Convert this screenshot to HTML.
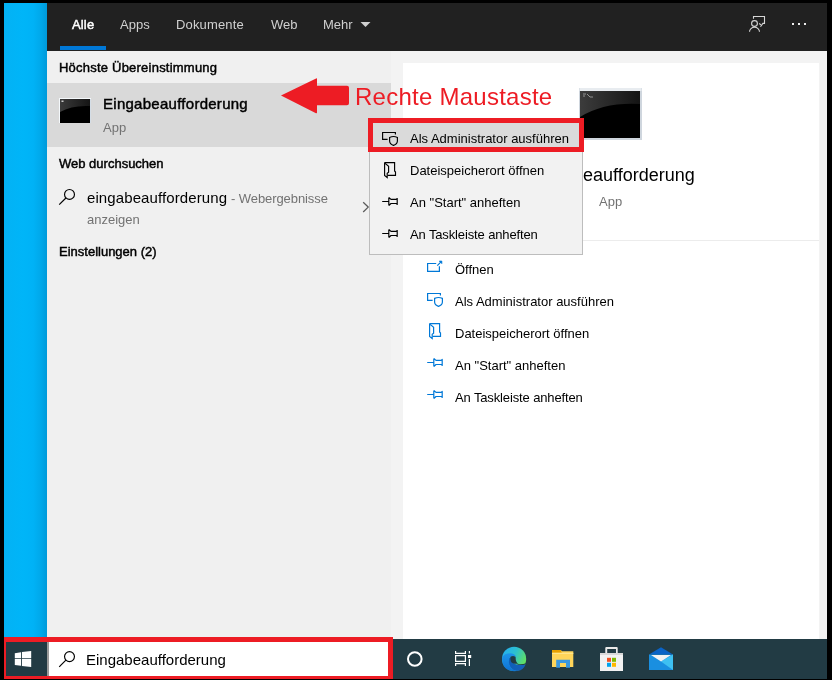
<!DOCTYPE html>
<html><head><meta charset="utf-8">
<style>
*{margin:0;padding:0;box-sizing:border-box}
html,body{width:832px;height:680px;overflow:hidden;background:#000;font-family:"Liberation Sans",sans-serif}
.a{position:absolute}
.t{position:absolute;white-space:nowrap;line-height:1;will-change:transform}
.s13{font-size:13px}
.b{-webkit-text-stroke:0.45px currentColor}
svg{position:absolute;overflow:visible}
</style></head><body>
<!-- blue strip -->
<div class="a" style="left:4px;top:3px;width:43px;height:634px;background:linear-gradient(90deg,#04b2f4 0%,#00b5f8 45%,#00b2f6 68%,#00a8ea 86%,#009ada 100%)"></div>
<!-- header -->
<div class="a" style="left:47px;top:3px;width:780px;height:48px;background:#212121"></div>
<!-- left pane -->
<div class="a" style="left:47px;top:51px;width:344px;height:588px;background:#f0f0f0"></div>
<!-- right gray -->
<div class="a" style="left:391px;top:51px;width:436px;height:588px;background:#f3f3f3"></div>
<!-- white card -->
<div class="a" style="left:403px;top:63px;width:416px;height:576px;background:#fff"></div>
<!-- taskbar -->
<div class="a" style="left:4px;top:639px;width:823px;height:40px;background:#223b44"></div>

<!-- header tabs -->
<div class="t s13 b" style="left:72px;top:18px;color:#fff;letter-spacing:0.15px">Alle</div>
<div class="t s13" style="left:120px;top:18px;color:#d0d0d0">Apps</div>
<div class="t s13" style="left:176px;top:18px;color:#d0d0d0;letter-spacing:0.15px">Dokumente</div>
<div class="t s13" style="left:271px;top:18px;color:#d0d0d0">Web</div>
<div class="t s13" style="left:323px;top:18px;color:#d0d0d0">Mehr</div>
<svg style="left:360px;top:21px" width="11" height="7"><path d="M0.5,1 H10.5 L5.5,6 Z" fill="#d0d0d0"/></svg>
<div class="a" style="left:60px;top:46px;width:46px;height:4px;background:#0078d7"></div>
<!-- feedback icon -->
<svg style="left:745px;top:12px" width="24" height="24" fill="none" stroke="#d6d6d6" stroke-width="1.1">
<path d="M8.5,6.8 V4.5 H19.5 V11.4 H17.9 L15.5,14.8 M14.1,11.5 L15.9,12.7"/>
<circle cx="9.5" cy="11.5" r="2.9"/>
<path d="M4.5,19.8 A5,4.6 0 0 1 14.5,19.8"/>
</svg>
<div class="a" style="left:792px;top:23px;width:2px;height:2px;background:#eee"></div>
<div class="a" style="left:798px;top:23px;width:2px;height:2px;background:#eee"></div>
<div class="a" style="left:804px;top:23px;width:2px;height:2px;background:#eee"></div>

<!-- left pane content -->
<div class="t s13 b" style="left:59px;top:61px;color:#000;letter-spacing:0.22px">Höchste Übereinstimmung</div>
<div class="a" style="left:47px;top:83px;width:344px;height:64px;background:#d9d9d9"></div>
<!-- small cmd icon -->
<div class="a" style="left:59px;top:98px;width:32px;height:25px;background:#d4dde6;border-top:1px solid #f4f8fb;border-left:1px solid #f4f8fb"></div>
<svg style="left:60px;top:99px" width="30" height="24"><defs><linearGradient id="g1" x1="0" y1="0" x2="1" y2="0"><stop offset="0" stop-color="#3a3a3a"/><stop offset="1" stop-color="#151515"/></linearGradient></defs>
<rect width="30" height="24" fill="#000"/><path d="M0,0 H30 V7 Q12,6 0,13 Z" fill="url(#g1)"/><rect x="1.5" y="1.5" width="2" height="1.5" fill="#ccc"/></svg>
<div class="t b" style="left:103px;top:96px;font-size:15px;color:#000;letter-spacing:0.27px">Eingabeaufforderung</div>
<div class="t s13" style="left:103px;top:121px;color:#727272">App</div>
<div class="t s13 b" style="left:59px;top:157px;color:#000">Web durchsuchen</div>
<svg style="left:55px;top:185px" width="24" height="24" fill="none" stroke="#000" stroke-width="1.15"><circle cx="14.5" cy="9.4" r="4.95"/><path d="M10.9,13 L4.2,19.7"/></svg>
<div class="t" style="left:87px;top:190px;font-size:15px;color:#000;letter-spacing:0.1px">eingabeaufforderung</div>
<div class="t s13" style="left:231px;top:192px;color:#727272;letter-spacing:-0.08px">- Webergebnisse</div>
<div class="t s13" style="left:87px;top:213px;color:#727272">anzeigen</div>
<svg style="left:356px;top:195px" width="16" height="24" fill="none" stroke="#5a5a5a" stroke-width="1.3"><path d="M7.2,7.2 L12.2,12.1 L7.2,17"/></svg>
<div class="t s13 b" style="left:59px;top:245px;color:#000">Einstellungen (2)</div>

<!-- right card -->
<svg style="left:579px;top:88px" width="63" height="52"><defs><linearGradient id="g2" x1="0" y1="0" x2="1" y2="0"><stop offset="0" stop-color="#3c3c3c"/><stop offset="1" stop-color="#141414"/></linearGradient></defs>
<rect x="0" y="0" width="63" height="52" fill="#cfd6de"/><rect x="0.5" y="0" width="62" height="3" fill="#e8ecf0"/>
<rect x="1" y="3" width="60" height="47" fill="#000"/><path d="M1,3 H61 V16 Q25,14 1,29 Z" fill="url(#g2)"/>
<path d="M4,6 h3 M4,8 h2 M8,6 l3,3 h3" stroke="#aaa" stroke-width="0.8" fill="none"/></svg>
<div class="t" style="left:527px;top:166px;font-size:18px;color:#000">Eingabeaufforderung</div>
<div class="t s13" style="left:599px;top:195px;color:#727272">App</div>
<div class="a" style="left:403px;top:240px;width:416px;height:1px;background:#ececec"></div>

<svg style="left:423px;top:255px" width="24" height="24" fill="none" stroke="#0078d7" stroke-width="1.2"><path d="M13.2,8.5 H4.6 V16.4 H16.4 V11.3 M14.3,10.6 L18.2,6.7"/><path d="M16.3,6.1 H18.8 V8.6 Z" fill="#0078d7" stroke-width="0.8"/></svg>
<svg style="left:423px;top:287px" width="24" height="24" fill="none" stroke="#0078d7" stroke-width="1.2"><path d="M9.6,13.4 H4.6 V6.5 H17.4 V8.6"/><path d="M11.6,11.4 Q15.5,9.6 19.4,11.4 V15 Q19.4,18 15.5,19.4 Q11.6,18 11.6,15 Z"/></svg>
<svg style="left:423px;top:319px" width="24" height="24" fill="none" stroke="#0078d7" stroke-width="1.2"><path d="M6.6,4.6 H16.6 V13 L17.5,14 V17.3 H9.6"/><path d="M6.6,4.6 V17.5 L9.2,19.5 V15.2 L10.6,14.2 V8.2 L7.2,5.4"/></svg>
<svg style="left:423px;top:351px" width="24" height="24" fill="none" stroke="#0078d7" stroke-width="1.2" stroke-linejoin="round"><path d="M4.2,11.5 H10.6 M10.8,7.4 V15.5 M10.8,7.5 L13,9.4 H18.2 L19.2,8.5 V14.4 L18.2,13.5 H13 L10.8,15.5"/></svg>
<svg style="left:423px;top:383px" width="24" height="24" fill="none" stroke="#0078d7" stroke-width="1.2" stroke-linejoin="round"><path d="M4.2,11.5 H10.6 M10.8,7.4 V15.5 M10.8,7.5 L13,9.4 H18.2 L19.2,8.5 V14.4 L18.2,13.5 H13 L10.8,15.5"/></svg>
<div class="t s13" style="left:455px;top:263px;color:#000">Öffnen</div>
<div class="t s13" style="left:455px;top:295px;color:#000">Als Administrator ausführen</div>
<div class="t s13" style="left:455px;top:327px;color:#000">Dateispeicherort öffnen</div>
<div class="t s13" style="left:455px;top:359px;color:#000">An "Start" anheften</div>
<div class="t s13" style="left:455px;top:391px;color:#000;letter-spacing:-0.13px">An Taskleiste anheften</div>

<!-- context menu -->
<div class="a" style="left:369px;top:118px;width:214px;height:137px;background:#f2f2f2;border:1px solid #bdbdbd"></div>
<div class="a" style="left:368px;top:118px;width:216px;height:34px;border:5px solid #ed1c24;background:#dadada"></div>
<svg style="left:378px;top:126px" width="24" height="24" fill="none" stroke="#000" stroke-width="1.15"><path d="M9.6,13.4 H4.6 V6.5 H17.4 V8.6"/><path d="M11.6,11.4 Q15.5,9.6 19.4,11.4 V15 Q19.4,18 15.5,19.4 Q11.6,18 11.6,15 Z"/></svg>
<svg style="left:378px;top:158px" width="24" height="24" fill="none" stroke="#000" stroke-width="1.15"><path d="M6.6,4.6 H16.6 V13 L17.5,14 V17.3 H9.6"/><path d="M6.6,4.6 V17.5 L9.2,19.5 V15.2 L10.6,14.2 V8.2 L7.2,5.4"/></svg>
<svg style="left:378px;top:190px" width="24" height="24" fill="none" stroke="#000" stroke-width="1.15" stroke-linejoin="round"><path d="M4.2,11.5 H10.6 M10.8,7.4 V15.5 M10.8,7.5 L13,9.4 H18.2 L19.2,8.5 V14.4 L18.2,13.5 H13 L10.8,15.5"/></svg>
<svg style="left:378px;top:222px" width="24" height="24" fill="none" stroke="#000" stroke-width="1.15" stroke-linejoin="round"><path d="M4.2,11.5 H10.6 M10.8,7.4 V15.5 M10.8,7.5 L13,9.4 H18.2 L19.2,8.5 V14.4 L18.2,13.5 H13 L10.8,15.5"/></svg>
<div class="t s13" style="left:410px;top:132px;color:#000">Als Administrator ausführen</div>
<div class="t s13" style="left:410px;top:164px;color:#000">Dateispeicherort öffnen</div>
<div class="t s13" style="left:410px;top:196px;color:#000">An "Start" anheften</div>
<div class="t s13" style="left:410px;top:228px;color:#000;letter-spacing:-0.13px">An Taskleiste anheften</div>

<!-- red annotation -->
<svg style="left:275px;top:75px" width="80" height="45"><path d="M6,20.6 L41.6,3.2 Q42,3 42,4 V10.8 H72 Q74,10.8 74,12.8 V28.3 Q74,30.3 72,30.3 H42 V37.6 Q42,38.6 41,38.2 Z" fill="#ed1c24"/></svg>
<div class="t" style="left:355px;top:85px;font-size:24px;color:#ed1c24;letter-spacing:0.25px">Rechte Maustaste</div>

<!-- taskbar -->
<svg style="left:10px;top:646px" width="26" height="26" fill="#fff"><path d="M4.8,7.2 L11,6.2 V11.9 H4.8 Z M11.9,6.1 L21.2,4.9 V11.9 H11.9 Z M4.8,12.8 H11 V19.8 L4.8,19 Z M11.9,12.8 H21.2 V21 L11.9,20 Z"/></svg>
<div class="a" style="left:47px;top:642px;width:2px;height:34px;background:#9a9a9a"></div>
<div class="a" style="left:49px;top:642px;width:339px;height:34px;background:#fff"></div>
<svg style="left:55px;top:647px" width="24" height="24" fill="none" stroke="#000" stroke-width="1.15"><circle cx="14.5" cy="9.6" r="4.95"/><path d="M10.9,13.2 L4.2,19.9"/></svg>
<div class="t" style="left:86px;top:652px;font-size:15px;color:#000">Eingabeaufforderung</div>
<div class="a" style="left:4px;top:637px;width:389px;height:42px;border:solid #ed1c24;border-width:5px 5px 3px 2px"></div>

<svg style="left:400px;top:645px" width="30" height="30" fill="none" stroke="#fff" stroke-width="2"><circle cx="14.8" cy="14" r="6.8"/></svg>
<svg style="left:450px;top:646px" width="26" height="26" fill="none" stroke="#fff" stroke-width="1.2"><path d="M5.6,5 V7.3 H15.4 V5 M5.6,9.6 H15.4 V15.3 H5.6 Z M5.6,20 V17.6 H15.4 V20 M19.4,5 V7.6 M19.4,13 V20"/><rect x="18" y="9" width="3.2" height="3" fill="#fff" stroke="none"/></svg>
<!-- edge -->
<svg style="left:498px;top:643px" width="32" height="32"><defs>
<linearGradient id="eg1" x1="0" y1="0.2" x2="1" y2="0.7"><stop offset="0" stop-color="#25aef0"/><stop offset="0.45" stop-color="#2cc0d0"/><stop offset="1" stop-color="#6ae650"/></linearGradient>
<linearGradient id="eg2" x1="0" y1="0" x2="0" y2="1"><stop offset="0" stop-color="#1d95ea"/><stop offset="1" stop-color="#0f72d2"/></linearGradient>
<linearGradient id="eg3" x1="0" y1="0" x2="1" y2="0"><stop offset="0" stop-color="#0f5fb8"/><stop offset="1" stop-color="#1560b8"/></linearGradient></defs>
<circle cx="16.1" cy="15.9" r="12.1" fill="url(#eg1)"/>
<path d="M9.8,16 Q10.2,26.8 19,28.1 Q25.5,27.6 27.9,20.8 Q24,22.6 19.5,21.8 Q13.5,20.5 12.8,14 Z" fill="url(#eg3)"/>
<path d="M4.05,15.6 Q5,10.2 13,10.2 Q17.2,10.6 17.9,14 Q15,12.3 12.6,13.6 Q10.6,15 10.9,19.5 Q11.6,26.2 18.8,28 Q10,29 6,23.6 Q4,20 4.05,15.6 Z" fill="url(#eg2)"/>
<path d="M12.6,13.6 Q15.5,12.4 17.6,14 Q17.6,17.5 18.4,18.8 Q19,20.2 20.5,20.8 Q16,21 13.6,19.4 Q12,18 12.6,13.6 Z" fill="#223b44"/>
<path d="M19.5,20.9 Q24,21.6 27.9,20.2 L27.8,21.2 Q24,22.6 19.5,21.8 Z" fill="#223b44"/>
</svg>
<!-- explorer -->
<svg style="left:548px;top:643px" width="32" height="32">
<path d="M4,7 H12.8 L14,8.2 H25.3 V24 H4 Z" fill="#ffd55a"/>
<path d="M4,7 H12.8 L13.8,9.8 H4 Z" fill="#e8a000"/>
<path d="M4,9.8 H25.3 V11 H4 Z" fill="#ffe58a"/>
<path d="M8.2,16.8 H22 V24.8 H18 V20 H12 V24.8 H8.2 Z" fill="#3b98e0"/>
</svg>
<!-- store -->
<svg style="left:596px;top:643px" width="32" height="32">
<path d="M9.3,12 V5 Q9.3,4 10.3,4 H20.7 Q21.7,4 21.7,5 V12 H20 V6 H11.2 V12 Z" fill="#eaeaea"/>
<rect x="4" y="10" width="23" height="18" fill="#f2f2f2"/>
<rect x="4" y="10" width="23" height="2" fill="#d9d9d9"/>
<rect x="11" y="14.8" width="4" height="4" fill="#f25022"/>
<rect x="16" y="14.8" width="4" height="4" fill="#7fba00"/>
<rect x="11" y="19.8" width="4" height="4" fill="#00a4ef"/>
<rect x="16" y="19.8" width="4" height="4" fill="#ffb900"/>
</svg>
<!-- mail -->
<svg style="left:644px;top:643px" width="32" height="32">
<path d="M5,11.5 L17,4.3 L29,11.5 Z" fill="#0a63c6"/>
<rect x="5" y="11.5" width="24" height="15.5" fill="#1a8fe0"/>
<path d="M17,18.5 L29,11.5 V27 Z" fill="#3ec0f2"/>
<path d="M7,12 H27 L17,18.5 Z" fill="#f2f2f2"/>
</svg>
</body></html>
